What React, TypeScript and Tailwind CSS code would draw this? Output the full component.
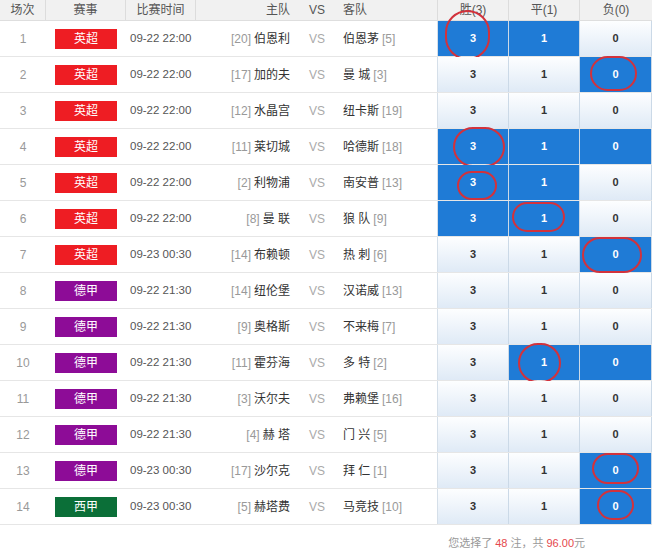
const matches = [
  { no: 1, league: "英超", time: "09-22 22:00", home: "伯恩利", hr: 20, away: "伯恩茅", ar: 5, sel: [1, 1, 0], ring: { i: 0, w: "w-[45px]", h: "h-[50px]", x: "left-[7px]", y: "top-[-11px]" } },
  { no: 2, league: "英超", time: "09-22 22:00", home: "加的夫", hr: 17, away: "曼 城", ar: 3, sel: [0, 0, 1], ring: { i: 2, w: "w-[47px]", h: "h-[35px]", x: "left-[10px]", y: "top-[-1px]" } },
  { no: 3, league: "英超", time: "09-22 22:00", home: "水晶宫", hr: 12, away: "纽卡斯", ar: 19, sel: [0, 0, 0] },
  { no: 4, league: "英超", time: "09-22 22:00", home: "莱切城", hr: 11, away: "哈德斯", ar: 18, sel: [1, 1, 1], ring: { i: 0, w: "w-[52px]", h: "h-[40px]", x: "left-[15px]", y: "top-[-2px]" } },
  { no: 5, league: "英超", time: "09-22 22:00", home: "利物浦", hr: 2, away: "南安普", ar: 13, sel: [1, 1, 0], ring: { i: 0, w: "w-[40px]", h: "h-[29px]", x: "left-[19px]", y: "top-[6px]" } },
  { no: 6, league: "英超", time: "09-22 22:00", home: "曼 联", hr: 8, away: "狼 队", ar: 9, sel: [1, 1, 0], ring: { i: 1, w: "w-[53px]", h: "h-[30px]", x: "left-[3px]", y: "top-[1px]" } },
  { no: 7, league: "英超", time: "09-23 00:30", home: "布赖顿", hr: 14, away: "热 刺", ar: 6, sel: [0, 0, 1], ring: { i: 2, w: "w-[60px]", h: "h-[36px]", x: "left-[2px]", y: "top-[0px]" } },
  { no: 8, league: "德甲", time: "09-22 21:30", home: "纽伦堡", hr: 14, away: "汉诺威", ar: 13, sel: [0, 0, 0] },
  { no: 9, league: "德甲", time: "09-22 21:30", home: "奥格斯", hr: 9, away: "不来梅", ar: 7, sel: [0, 0, 0] },
  { no: 10, league: "德甲", time: "09-22 21:30", home: "霍芬海", hr: 11, away: "多 特", ar: 2, sel: [0, 1, 1], ring: { i: 1, w: "w-[43px]", h: "h-[40px]", x: "left-[9px]", y: "top-[-2px]" } },
  { no: 11, league: "德甲", time: "09-22 21:30", home: "沃尔夫", hr: 3, away: "弗赖堡", ar: 16, sel: [0, 0, 0] },
  { no: 12, league: "德甲", time: "09-22 21:30", home: "赫 塔", hr: 4, away: "门 兴", ar: 5, sel: [0, 0, 0] },
  { no: 13, league: "德甲", time: "09-23 00:30", home: "沙尔克", hr: 17, away: "拜 仁", ar: 1, sel: [0, 0, 1], ring: { i: 2, w: "w-[47px]", h: "h-[31px]", x: "left-[12px]", y: "top-[0px]" } },
  { no: 14, league: "西甲", time: "09-23 00:30", home: "赫塔费", hr: 5, away: "马竞技", ar: 10, sel: [0, 0, 1], ring: { i: 2, w: "w-[37px]", h: "h-[30px]", x: "left-[17px]", y: "top-[1px]" } },
]

const leagueColor: Record<string, string> = {
  英超: "bg-[#ee1d23]",
  德甲: "bg-[#8d0c97]",
  西甲: "bg-[#0b6f38]",
}

const odds = ["3", "1", "0"]
const cols = "grid grid-cols-[46px_80px_70px_104px_34px_104px_71px_71px_72px]"

export default function App() {
  return (
    <div className="w-[652px] h-[554px] bg-white text-[12px] text-[#333] font-['Liberation_Sans','Noto_Sans_CJK_SC',sans-serif]">
      {/* Header */}
      <div className={`${cols} h-[21px] bg-[#f1f1f1] border-b border-[#dedede] text-[#555]`}>
        <div className="flex items-center justify-center border-r border-[#dcdcdc]">场次</div>
        <div className="flex items-center justify-center border-r border-[#dcdcdc]">赛事</div>
        <div className="flex items-center justify-center border-r border-[#dcdcdc]">比赛时间</div>
        <div className="flex items-center justify-end pr-[10px]">主队</div>
        <div className="flex items-center justify-center">VS</div>
        <div className="flex items-center pl-[9px] border-r border-[#dcdcdc]">客队</div>
        <div className="flex items-center justify-center border-r border-[#dcdcdc]">胜(3)</div>
        <div className="flex items-center justify-center border-r border-[#dcdcdc]">平(1)</div>
        <div className="flex items-center justify-center">负(0)</div>
      </div>

      {/* Rows */}
      {matches.map((m) => (
        <div key={m.no} className={`${cols} h-[36px] border-b border-[#e6e6e6]`}>
          <div className="flex items-center justify-center text-[#999]">{m.no}</div>
          <div className="flex items-center justify-center">
            <div className={`${leagueColor[m.league]} w-[62px] h-[20px] flex items-center justify-center text-white`}>
              {m.league}
            </div>
          </div>
          <div className="flex items-center pl-[4px] text-[11.5px] text-[#555]">{m.time}</div>
          <div className="flex items-center justify-end pr-[10px]">
            <span className="text-[#999] mr-[3px]">[{m.hr}]</span>
            {m.home}
          </div>
          <div className="flex items-center justify-center text-[#aaa]">VS</div>
          <div className="flex items-center pl-[9px] border-r border-[#d5dfe9]">
            {m.away}
            <span className="text-[#999] ml-[3px]">[{m.ar}]</span>
          </div>
          {odds.map((o, i) => (
            <div
              key={o}
              className={`relative flex items-center justify-center font-bold text-[11px] border-r border-[#cbd9e7] ${
                m.sel[i]
                  ? "bg-[#1f7bd6] text-white"
                  : "bg-gradient-to-b from-[#fdfeff] to-[#dfeaf6] text-[#333]"
              }`}
            >
              {o}
              {m.ring && m.ring.i === i && (
                <span
                  className={`absolute ${m.ring.w} ${m.ring.h} ${m.ring.x} ${m.ring.y} rounded-full border-[2.5px] border-[#d2323c]`}
                />
              )}
            </div>
          ))}
        </div>
      ))}

      {/* Footer */}
      <div className="flex justify-end items-center h-[36px] pr-[67px] text-[11px] text-[#999]">
        您选择了<span className="text-[#e5484d] mx-[3px]">48</span>注，共<span className="text-[#e5484d] ml-[3px]">96.00</span>元
      </div>
    </div>
  )
}
